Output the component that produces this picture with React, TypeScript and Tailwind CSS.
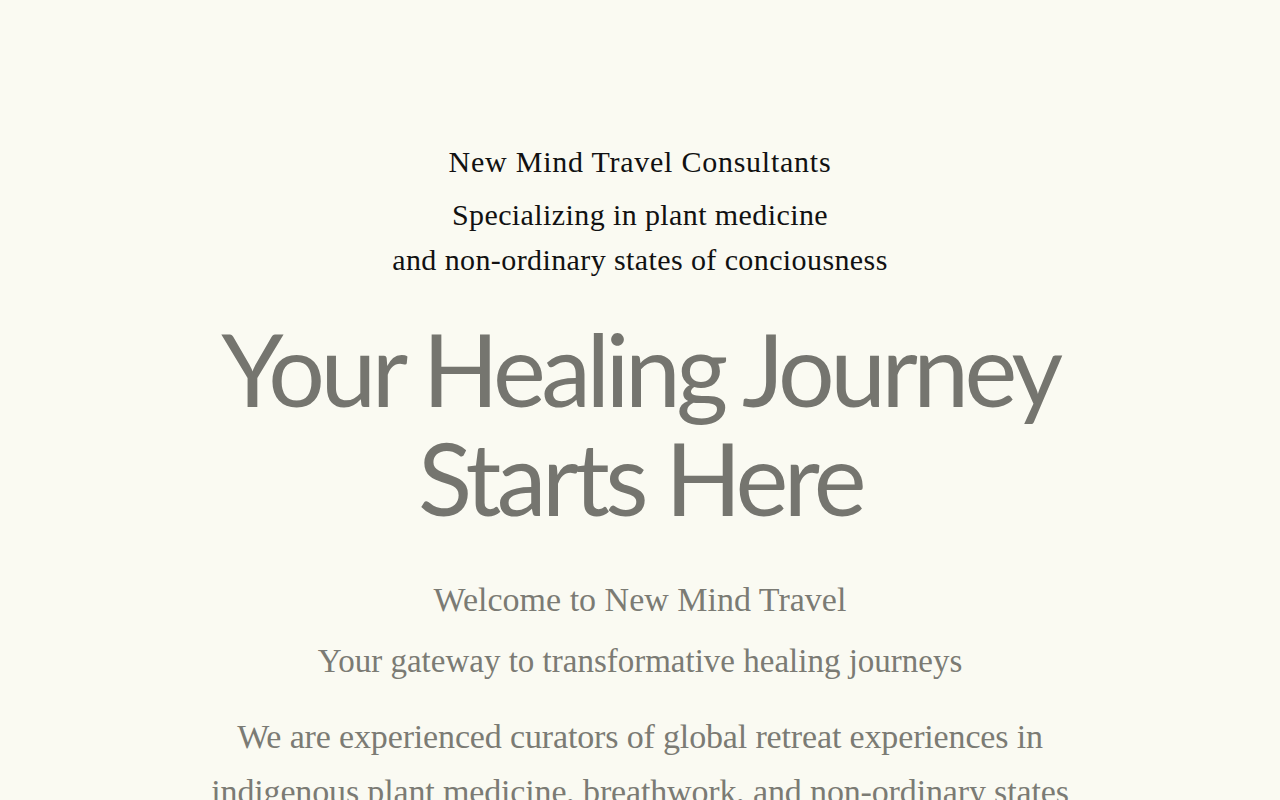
export default function App() {
  return (
    <div className="min-h-screen bg-[#fafaf2] overflow-hidden">
      <section className="flex flex-col items-center text-center pt-[140px]">
        <div className="font-['Liberation_Serif',serif] text-[#111111]">
          <p className="text-[30px] leading-[44px] tracking-[0.75px]">New Mind Travel Consultants</p>
          <p className="mt-[8px] text-[30px] leading-[45px] tracking-[0.4px]">
            Specializing in plant medicine
            <br />
            and non-ordinary states of conciousness
          </p>
        </div>

        <h1 className="mt-[32px] font-['Lato',sans-serif] text-[100px] leading-[109px] tracking-[-0.045em] text-[#75756f]">
          Your Healing Journey
          <br />
          Starts Here
        </h1>

        <div className="mt-[40px] font-['Liberation_Serif',serif] text-[#7b7b74]">
          <p className="text-[34px] leading-[56px]">Welcome to New Mind Travel</p>
          <p className="mt-[5px] text-[33px] leading-[56px]">
            Your gateway to transformative healing journeys
          </p>
          <p className="mt-[20px] text-[34px] leading-[55px] tracking-[-0.15px]">
            We are experienced curators of global retreat experiences in
            <br />
            indigenous plant medicine, breathwork, and non-ordinary states
            <br />
            of consciousness.
          </p>
        </div>
      </section>
    </div>
  );
}
